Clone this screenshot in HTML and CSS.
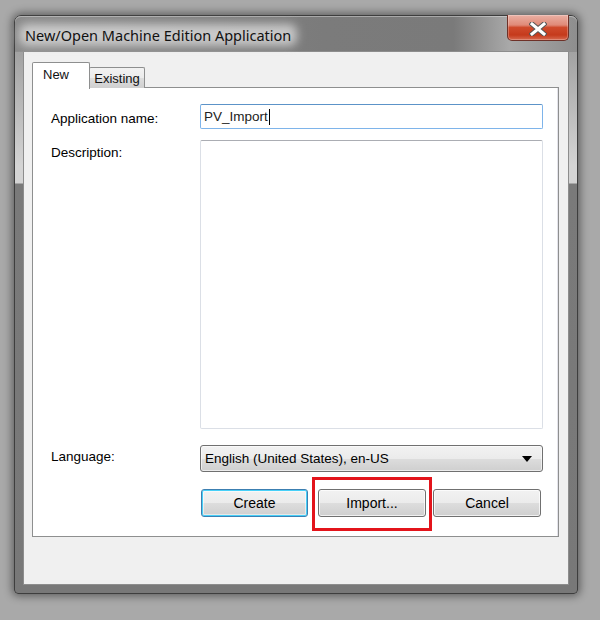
FILE: index.html
```html
<!DOCTYPE html>
<html lang="en">
<head>
    <meta charset="UTF-8">
    <title>New/Open Machine Edition Application</title>
    <link rel="stylesheet" href="styles.css">
</head>
<body>
    <div class="ventana">
        <!-- barra de titulo -->
        <div class="titlebar">
            <span class="titulo">New/Open Machine Edition Application</span>
            <button class="cerrar" title="Close">
                <svg width="18" height="14" viewBox="0 0 18 14">
                    <path d="M3 2 L15 12 M15 2 L3 12" stroke="#555" stroke-width="5" stroke-linecap="square" fill="none"/>
                    <path d="M3 2 L15 12 M15 2 L3 12" stroke="#fff" stroke-width="3" stroke-linecap="square" fill="none"/>
                </svg>
            </button>
        </div>

        <div class="cliente">
            <div class="tabs">
                <div class="tab activa">New</div>
                <div class="tab">Existing</div>
            </div>

            <div class="panel">
                <div class="formulario">
                    <label class="etiqueta">Application name:</label>
                    <div class="textbox">PV_Import<span class="cursor"></span></div>

                    <label class="etiqueta arriba">Description:</label>
                    <div class="textarea"></div>

                    <label class="etiqueta idioma">Language:</label>
                    <div class="combo idioma">
                        <span>English (United States), en-US</span>
                        <svg width="10" height="6" viewBox="0 0 10 6"><path d="M0 0 H10 L5 6 Z" fill="#000"/></svg>
                    </div>
                </div>

                <div class="botones">
                    <button class="boton por-defecto">Create</button>
                    <span class="marcado">
                        <button class="boton">Import...</button>
                        <span class="recuadro"></span>
                    </span>
                    <button class="boton cancelar">Cancel</button>
                </div>
            </div>
        </div>
    </div>
</body>
</html>
```

FILE: styles.css
```css
* {
    box-sizing: border-box;
}
body {
    margin: 0;
    width: 600px;
    height: 620px;
    background-color: #a9a9a9;
    font-family: 'Liberation Sans', Arial, sans-serif;
    font-size: 13.5px;
    color: #000;
    padding: 15px 0 0 14px;
}
.ventana {
    width: 564px;
    height: 579px;
    border: 1px solid #3e3e3e;
    border-radius: 7px 7px 4px 4px;
    box-shadow: 0 0 9px 2px rgba(0, 0, 0, 0.45);
    background: linear-gradient(to bottom, #8c8c8c 0, #7c7c7c 35px, #a2a2a2 36px, #d4d4d4 150px, #d4d4d4 167px, #7a7a7a 168px, #787878 100%);
    display: flex;
    flex-direction: column;
    padding: 0 8px 8px 8px;
}
.titlebar {
    height: 35px;
    margin: 0 -8px;
    padding: 0 8px 0 10px;
    display: flex;
    justify-content: space-between;
    align-items: flex-start;
    border-radius: 6px 6px 0 0;
    background: linear-gradient(to right, #8a8a8a 0, #7b7b7b 55%, #7a7a7a 78%, #a9a9a9 88%, #8e8e8e 100%);
    box-shadow: inset 0 1px 0 rgba(255, 255, 255, 0.35);
}
.titulo {
    position: relative;
    margin-top: 10px;
    font-family: 'Noto Sans', 'Open Sans', sans-serif;
    font-size: 14.5px;
    line-height: 18px;
    color: #111;
    z-index: 0;
}
.titulo::before {
    content: '';
    position: absolute;
    left: -6px;
    right: -6px;
    top: -2px;
    bottom: -2px;
    background: rgba(225, 225, 225, 0.75);
    border-radius: 8px;
    filter: blur(5px);
    z-index: -1;
}
.cerrar {
    width: 62px;
    height: 26px;
    margin-top: -1px;
    padding: 0;
    border: 1px solid #6e3128;
    border-top: none;
    border-radius: 0 0 5px 5px;
    background: linear-gradient(to bottom, #eab0a4 0, #e08a78 40%, #cf4a2c 50%, #c53a1c 80%, #d76a50 100%);
    box-shadow: inset 0 0 0 1px rgba(255, 255, 255, 0.25);
    display: flex;
    align-items: center;
    justify-content: center;
}
.cerrar svg {
    margin-top: 2px;
}
.cliente {
    flex: 1;
    background-color: #f0f0f0;
    border: 1px solid #8d8d8d;
    padding: 10px 9px 0 8px;
}
.tabs {
    display: flex;
    align-items: flex-end;
    height: 26px;
    position: relative;
    z-index: 1;
}
.tab {
    height: 21px;
    width: 56px;
    border: 1px solid #8e8f8f;
    border-bottom: none;
    border-radius: 2px 2px 0 0;
    background: linear-gradient(to bottom, #f2f2f2 0, #ebebeb 50%, #dddddd 51%, #cfcfcf 100%);
    text-align: center;
    line-height: 21px;
    font-size: 13px;
    color: #111;
}
.tab.activa {
    height: 27px;
    width: 58px;
    margin-bottom: -1px;
    background: #fff;
    text-align: left;
    padding-left: 10px;
    line-height: 24px;
}
.tab + .tab {
    margin-left: -1px;
}
.panel {
    height: 450px;
    margin-top: -1px;
    background-color: #fff;
    border: 1px solid #8e8f8f;
    box-shadow: inset -1px 0 0 #e3e3ea;
    padding: 16px 15px 0 18px;
}
.formulario {
    display: grid;
    grid-template-columns: 149px 1fr;
    grid-template-rows: 25px 289px 32px;
    row-gap: 11px;
}
.etiqueta {
    align-self: center;
    padding-top: 3px;
}
.etiqueta.arriba {
    align-self: start;
    padding-top: 5px;
}
.idioma {
    margin-top: 5px;
}
.etiqueta.idioma {
    padding-top: 0;
    margin-top: 1px;
}
.textbox {
    border: 1px solid #7eb4ea;
    border-top-color: #5c93c8;
    border-radius: 2px;
    padding: 0 0 0 3px;
    line-height: 23px;
    display: flex;
    align-items: center;
    color: #222;
}
.cursor {
    display: inline-block;
    width: 1px;
    height: 16px;
    background: #000;
    margin-left: 1px;
}
.textarea {
    border: 1px solid #dbdfe6;
    border-top-color: #abadb3;
    border-radius: 2px;
}
.combo {
    border: 1px solid #707070;
    border-radius: 3px;
    background: linear-gradient(to bottom, #f2f2f2 0, #ebebeb 50%, #dddddd 51%, #cfcfcf 100%);
    box-shadow: inset 0 0 0 1px rgba(255, 255, 255, 0.6);
    display: flex;
    justify-content: space-between;
    align-items: center;
    padding: 0 10px 0 4px;
}
.botones {
    display: flex;
    margin: 17px 0 0 150px;
}
.boton {
    width: 108px;
    height: 28px;
    border: 1px solid #707070;
    border-radius: 3px;
    background: linear-gradient(to bottom, #f2f2f2 0, #ebebeb 50%, #dddddd 51%, #cfcfcf 100%);
    box-shadow: inset 0 0 0 1px rgba(255, 255, 255, 0.7);
    font-family: 'Liberation Sans', Arial, sans-serif;
    font-size: 14px;
    color: #000;
    padding: 0;
}
.boton.por-defecto {
    width: 107px;
    border-color: #3c7fb1;
    box-shadow: inset 0 0 0 1px #48d0f8, inset 0 0 0 2px rgba(255, 255, 255, 0.5);
    margin-right: 10px;
}
.marcado {
    position: relative;
    display: flex;
}
.recuadro {
    position: absolute;
    left: -6px;
    top: -12px;
    width: 120px;
    height: 54px;
    border: 3px solid #e3141b;
}
.boton.cancelar {
    margin-left: 7px;
}
```
